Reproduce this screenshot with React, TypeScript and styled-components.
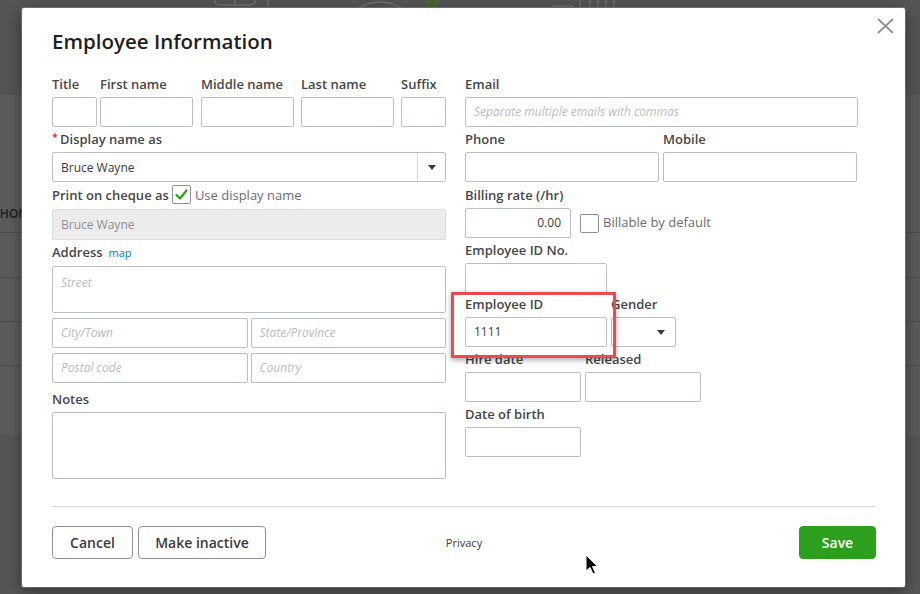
import React from 'react';
import styled, { createGlobalStyle } from 'styled-components';

const GlobalStyle = createGlobalStyle`
	html, body {
		margin: 0;
		padding: 0;
		background: #555;
	}
	* {
		box-sizing: border-box;
	}
`;

const Page = styled.div`
	position: relative;
	width: 920px;
	height: 594px;
	overflow: hidden;
	background: #555555;
	font-family: 'Open Sans', 'Liberation Sans', sans-serif;
`;

// dimmed app page behind the dialog
const TopArea = styled.div`
	height: 95px;
	background: #545454;
`;

const TableArea = styled.div`
	height: 340px;
	background: #5b5b5b;
	padding-top: 100px;
`;

const TableRow = styled.div<{ $h: number; $line?: boolean }>`
	height: ${(p) => p.$h}px;
	border-bottom: ${(p) => (p.$line ? '1px solid #4b4b4b' : 'none')};
	display: flex;
	align-items: center;
`;

const HeadCell = styled.span`
	font-family: 'Liberation Sans', sans-serif;
	font-size: 12px;
	font-weight: 700;
	color: #262626;
	letter-spacing: 0.3px;
`;

const Modal = styled.div`
	position: absolute;
	left: 22px;
	top: 8px;
	width: 883px;
	height: 579px;
	background: #fff;
	border-radius: 2px;
	box-shadow: 0 0 0 1px rgba(255, 255, 255, 0.18), 0 4px 16px rgba(0, 0, 0, 0.4);
	padding: 0 29px 0 30px;
	display: flex;
	flex-direction: column;
	color: #393a3d;
`;

const Header = styled.div`
	display: flex;
	justify-content: space-between;
	align-items: flex-start;
	height: 67px;
	margin-right: -18px;
`;

const Title = styled.h1`
	margin: 21px 0 0;
	font-size: 20.5px;
	line-height: 24px;
	font-weight: 600;
	color: #1f1f1f;
`;

const CloseButton = styled.div`
	margin-top: 10px;
	width: 17px;
	height: 16px;
	display: flex;
`;

const Body = styled.div`
	display: grid;
	grid-template-columns: 394px 393px;
	column-gap: 19px;
`;

const Column = styled.div`
	display: flex;
	flex-direction: column;
`;

const Field = styled.div<{ $mt?: number; $w?: number; $ml?: number }>`
	margin-top: ${(p) => p.$mt ?? 0}px;
	margin-left: ${(p) => p.$ml ?? 0}px;
	width: ${(p) => (p.$w ? `${p.$w}px` : 'auto')};
	flex-shrink: 0;
`;

const Label = styled.div`
	font-size: 13px;
	font-weight: 600;
	line-height: 18px;
	color: #45464a;
	margin-bottom: 4px;
	white-space: nowrap;
	display: flex;
	align-items: baseline;
`;

const Required = styled.span`
	color: #d52b1e;
	font-size: 11px;
	margin-right: 2px;
	align-self: flex-start;
	line-height: 14px;
`;

const MapLink = styled.span`
	color: #0077c5;
	font-size: 11px;
	font-weight: 400;
	margin-left: 6px;
`;

const Input = styled.div<{ $w?: number; $h?: number; $disabled?: boolean; $right?: boolean; $top?: boolean }>`
	width: ${(p) => (p.$w ? `${p.$w}px` : '100%')};
	height: ${(p) => p.$h ?? 30}px;
	border: 1px solid #babec5;
	border-radius: 2px;
	background: ${(p) => (p.$disabled ? '#ececec' : '#fff')};
	border-color: ${(p) => (p.$disabled ? '#dcdde0' : '#babec5')};
	padding: ${(p) => (p.$top ? '7px 8px 0' : p.$right ? '0 9px 0 8px' : '0 8px')};
	display: flex;
	align-items: ${(p) => (p.$top ? 'flex-start' : 'center')};
	justify-content: ${(p) => (p.$right ? 'flex-end' : 'flex-start')};
	font-size: 12px;
	line-height: 18px;
	color: ${(p) => (p.$disabled ? '#8d9096' : '#393a3d')};
	flex-shrink: 0;
`;

const Placeholder = styled.span`
	font-style: italic;
	color: #b8bbc0;
`;

const SelectBox = styled.div<{ $w?: number; $divider?: boolean }>`
	width: ${(p) => (p.$w ? `${p.$w}px` : '100%')};
	height: 30px;
	border: 1px solid #babec5;
	border-radius: 2px;
	display: flex;
	align-items: stretch;
	font-size: 12px;
	color: #393a3d;
	.value {
		flex: 1;
		display: flex;
		align-items: center;
		padding: 0 8px;
	}
	.caret {
		width: 28px;
		display: flex;
		align-items: center;
		justify-content: center;
		border-left: ${(p) => (p.$divider ? '1px solid #d4d7dc' : 'none')};
	}
`;

const Caret = styled.span`
	width: 0;
	height: 0;
	border-left: 4px solid transparent;
	border-right: 4px solid transparent;
	border-top: 5px solid #393a3d;
`;

const Row = styled.div<{ $mt?: number; $gap?: number }>`
	display: flex;
	align-items: flex-start;
	margin-top: ${(p) => p.$mt ?? 0}px;
	gap: ${(p) => p.$gap ?? 0}px;
`;

const PairRow = styled.div<{ $mt?: number }>`
	display: grid;
	grid-template-columns: 1fr 1fr;
	column-gap: 3px;
	margin-top: ${(p) => p.$mt ?? 0}px;
`;

const CheckRow = styled.div<{ $mt?: number; $ml?: number; $lift?: number }>`
	display: flex;
	align-items: center;
	margin-top: ${(p) => p.$mt ?? 0}px;
	margin-left: ${(p) => p.$ml ?? 0}px;
	height: 19px;
	.label {
		font-size: 13px;
		font-weight: 600;
		color: #45464a;
		margin-right: 3px;
	}
	.text {
		font-size: 13px;
		color: #6b6c72;
		margin-left: 4px;
		margin-top: ${(p) => -(p.$lift ?? 0)}px;
	}
`;

const Checkbox = styled.span`
	width: 19px;
	height: 19px;
	border: 1px solid #8d9096;
	border-radius: 2px;
	background: #fff;
	display: flex;
	align-items: center;
	justify-content: center;
	flex-shrink: 0;
`;

const Footer = styled.div`
	margin-top: 27px;
	border-top: 1px solid #d4d7dc;
	padding-top: 19px;
	display: grid;
	grid-template-columns: 1fr auto 1fr;
	align-items: center;
`;

const ButtonGroup = styled.div`
	display: flex;
	gap: 5px;
`;

const Button = styled.button<{ $w: number; $primary?: boolean }>`
	width: ${(p) => p.$w}px;
	height: 33px;
	border-radius: 4px;
	border: 1px solid ${(p) => (p.$primary ? '#2ca01c' : '#8d9096')};
	background: ${(p) => (p.$primary ? '#2ca01c' : '#fff')};
	color: ${(p) => (p.$primary ? '#fff' : '#393a3d')};
	font-family: 'Open Sans', 'Liberation Sans', sans-serif;
	font-size: 14px;
	font-weight: 600;
	padding: 0;
	justify-self: ${(p) => (p.$primary ? 'end' : 'auto')};
`;

const Privacy = styled.span`
	font-size: 11px;
	color: #393a3d;
`;

const Highlight = styled.div`
	position: absolute;
	left: 429px;
	top: 284px;
	width: 165px;
	height: 66px;
	border: 3px solid #ec4a4e;
	box-shadow: 0 2px 5px rgba(0, 0, 0, 0.35);
`;

const Cursor = styled.svg`
	position: absolute;
	left: 585px;
	top: 554px;
`;

const Check = () => (
	<svg width="13" height="11" viewBox="0 0 13 11">
		<path d="M1.5 6 L5 9.5 L11.5 1.5" fill="none" stroke="#2ca01c" strokeWidth="2.2" strokeLinecap="round" strokeLinejoin="round" />
	</svg>
);

type NameCellInfo = { label: string; w: number; ml: number };

const nameCells: NameCellInfo[] = [
	{ label: 'Title', w: 45, ml: 0 },
	{ label: 'First name', w: 93, ml: 3 },
	{ label: 'Middle name', w: 93, ml: 8 },
	{ label: 'Last name', w: 93, ml: 7 },
	{ label: 'Suffix', w: 45, ml: 7 },
];

export default function App() {
	return (
		<Page>
			<GlobalStyle />
			<TopArea>
				<svg width="920" height="95" viewBox="0 0 920 95">
					<path d="M203 -6 L217 4 L211 -6 Z" fill="#3d6a22" />
					<rect x="215" y="-20" width="40" height="25" rx="4" fill="none" stroke="#717171" strokeWidth="1.5" />
					<line x1="235" y1="-10" x2="235" y2="4" stroke="#717171" strokeWidth="1.5" />
					<line x1="268" y1="0" x2="268" y2="7" stroke="#717171" strokeWidth="1.5" />
					<ellipse cx="380" cy="26" rx="31" ry="24" fill="none" stroke="#6f6f6f" strokeWidth="1.5" />
					<path d="M425 8 L434 -4 M431 9 L440 -3" stroke="#3f6e1f" strokeWidth="3" />
					<line x1="552" y1="6" x2="574" y2="6" stroke="#6f6f6f" strokeWidth="1.5" />
					<path d="M580 0 V7 M590 0 V7 M598 0 V7 M606 0 V7 M614 0 V7" stroke="#6f6f6f" strokeWidth="1.5" />
				</svg>
			</TopArea>
			<TableArea>
				<TableRow $h={38} $line>
					<HeadCell>HON</HeadCell>
				</TableRow>
				<TableRow $h={45} $line />
				<TableRow $h={44} $line />
				<TableRow $h={44} $line />
			</TableArea>

			<Modal>
				<Header>
					<Title>Employee Information</Title>
					<CloseButton>
						<svg width="17" height="16" viewBox="0 0 17 16">
							<path d="M1 1 L16 15 M16 1 L1 15" stroke="#8d9096" strokeWidth="1.8" />
						</svg>
					</CloseButton>
				</Header>

				<Body>
					<Column>
						<Row>
							{nameCells.map((cell) => (
								<Field key={`name-cell_${cell.label}`} $w={cell.w} $ml={cell.ml}>
									<Label>{cell.label}</Label>
									<Input />
								</Field>
							))}
						</Row>

						<Field $mt={3}>
							<Label>
								<Required>*</Required>Display name as
							</Label>
							<SelectBox $divider>
								<div className="value">Bruce Wayne</div>
								<div className="caret">
									<Caret />
								</div>
							</SelectBox>
						</Field>

						<CheckRow $mt={3}>
							<span className="label">Print on cheque as</span>
							<Checkbox>
								<Check />
							</Checkbox>
							<span className="text">Use display name</span>
						</CheckRow>
						<Field $mt={5}>
							<Input $h={31} $disabled>
								Bruce Wayne
							</Input>
						</Field>

						<Field $mt={3}>
							<Label>
								Address<MapLink>map</MapLink>
							</Label>
							<Input $h={47} $top>
								<Placeholder>Street</Placeholder>
							</Input>
						</Field>
						<PairRow $mt={5}>
							<Input>
								<Placeholder>City/Town</Placeholder>
							</Input>
							<Input>
								<Placeholder>State/Province</Placeholder>
							</Input>
						</PairRow>
						<PairRow $mt={5}>
							<Input>
								<Placeholder>Postal code</Placeholder>
							</Input>
							<Input>
								<Placeholder>Country</Placeholder>
							</Input>
						</PairRow>

						<Field $mt={7}>
							<Label>Notes</Label>
							<Input $h={67} />
						</Field>
					</Column>

					<Column>
						<Field>
							<Label>Email</Label>
							<Input>
								<Placeholder>Separate multiple emails with commas</Placeholder>
							</Input>
						</Field>

						<Row $mt={3} $gap={4}>
							<Field $w={194}>
								<Label>Phone</Label>
								<Input />
							</Field>
							<Field $w={194}>
								<Label>Mobile</Label>
								<Input />
							</Field>
						</Row>

						<Field $mt={4}>
							<Label>Billing rate (/hr)</Label>
							<Row>
								<Input $w={106} $right>
									0.00
								</Input>
								<CheckRow $mt={6} $ml={9} $lift={3}>
									<Checkbox />
									<span className="text">Billable by default</span>
								</CheckRow>
							</Row>
						</Field>

						<Field $mt={3}>
							<Label>Employee ID No.</Label>
							<Input $w={142} />
						</Field>

						<Row $mt={2} $gap={4}>
							<Field $w={142}>
								<Label>Employee ID</Label>
								<Input>1111</Input>
							</Field>
							<Field $w={65}>
								<Label>Gender</Label>
								<SelectBox>
									<div className="value" />
									<div className="caret">
										<Caret />
									</div>
								</SelectBox>
							</Field>
						</Row>

						<Row $mt={3} $gap={4}>
							<Field $w={116}>
								<Label>Hire date</Label>
								<Input />
							</Field>
							<Field $w={116}>
								<Label>Released</Label>
								<Input />
							</Field>
						</Row>

						<Field $mt={3}>
							<Label>Date of birth</Label>
							<Input $w={116} />
						</Field>
					</Column>
				</Body>

				<Footer>
					<ButtonGroup>
						<Button $w={81}>Cancel</Button>
						<Button $w={128}>Make inactive</Button>
					</ButtonGroup>
					<Privacy>Privacy</Privacy>
					<Button $w={77} $primary>
						Save
					</Button>
				</Footer>

				<Highlight />
			</Modal>

			<Cursor width="14" height="22" viewBox="0 0 14 22">
				<path d="M1 1 L1 17 L5 13.5 L8 20 L10.5 19 L7.5 12.5 L12.5 12.5 Z" fill="#000" stroke="#fff" strokeWidth="1" />
			</Cursor>
		</Page>
	);
}
